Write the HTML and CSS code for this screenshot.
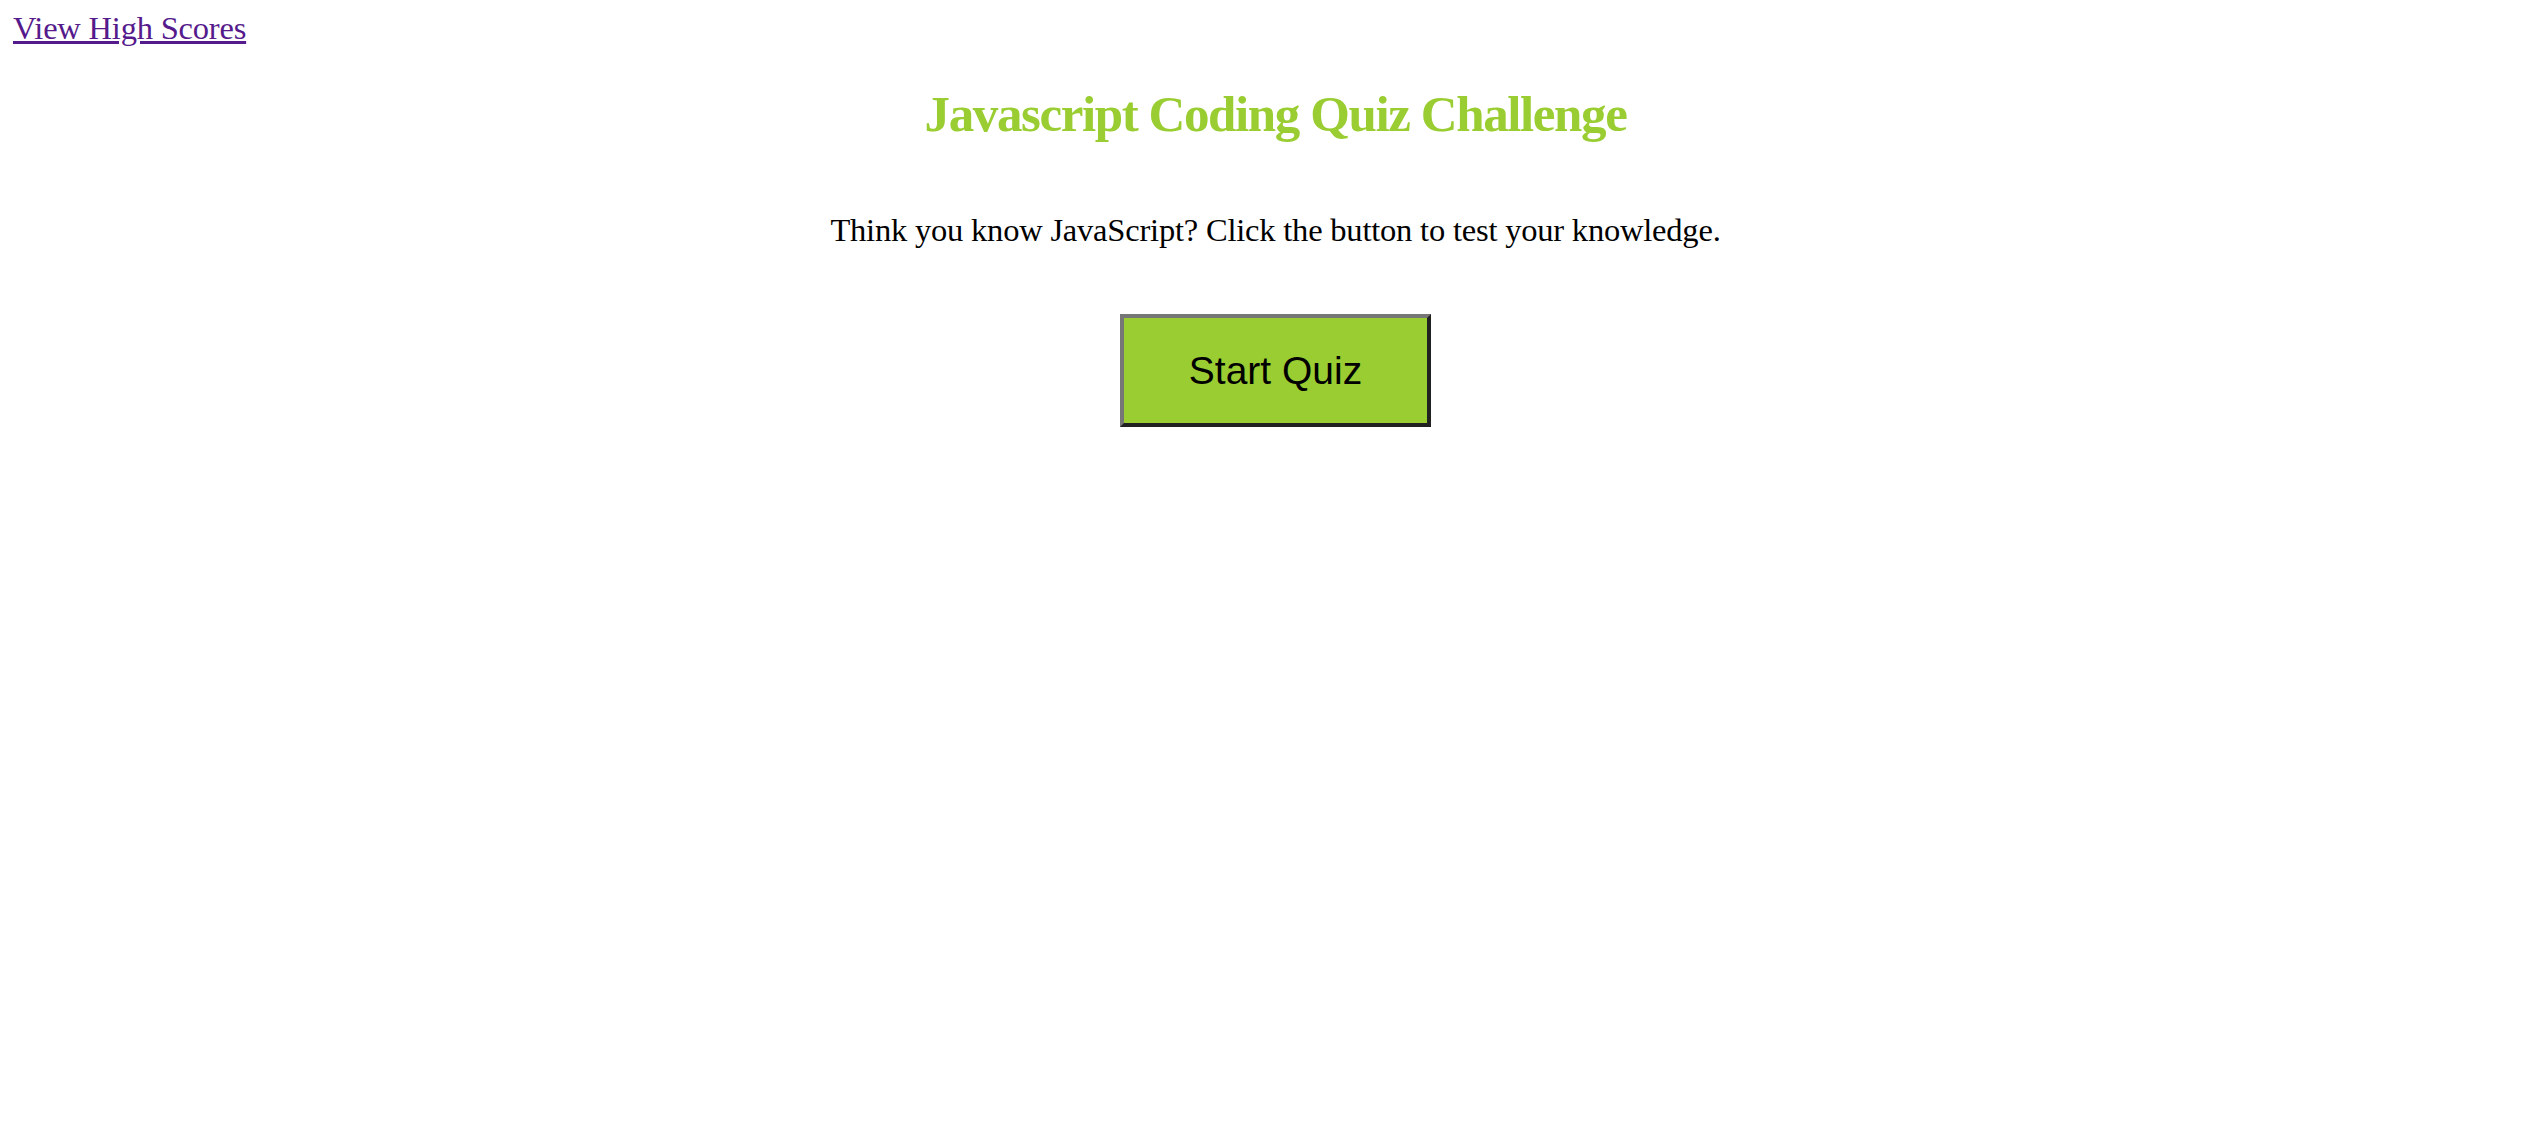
FILE: index.html
```html
<!DOCTYPE html>
<html lang="en">
<head>
<meta charset="utf-8">
<title>Javascript Coding Quiz Challenge</title>
<link rel="stylesheet" href="styles.css">
</head>
<body>
<header class="top">
  <a class="scores" href="#">View High Scores</a>
</header>
<main class="intro">
  <h1 class="title">Javascript Coding Quiz Challenge</h1>
  <p class="lead">Think you know JavaScript? Click the button to test your knowledge.</p>
  <button class="start" type="button">Start Quiz</button>
</main>
</body>
</html>
```

FILE: styles.css
```css
html {
  background: #ffffff;
}

body {
  margin: 0;
  padding: 9.5px 8px 0 13px;
  font-family: "Liberation Serif", "Times New Roman", serif;
  color: #000000;
  background: #ffffff;
}

.top {
  font-size: 32.5px;
  line-height: normal;
}

.scores {
  color: #551a8b;
  text-decoration: underline;
  letter-spacing: -0.2px;
}

.intro {
  display: flex;
  flex-direction: column;
  align-items: center;
}

.title {
  margin: 38.5px 0 0;
  font-size: 51px;
  font-weight: bold;
  line-height: normal;
  letter-spacing: -1.4px;
  color: #9acd32;
  text-align: center;
}

.lead {
  margin: 69px 0 0;
  font-size: 32.5px;
  line-height: normal;
  letter-spacing: -0.2px;
  text-align: center;
}

.start {
  margin: 65px 0 0;
  padding: 30.6px 65px;
  font-family: "Liberation Sans", Arial, sans-serif;
  font-size: 39px;
  line-height: normal;
  color: #000000;
  background: #9acd32;
  border-width: 4px;
  border-style: solid;
  border-color: #767676 #212121 #212121 #767676;
  border-radius: 0;
  cursor: pointer;
}
```
